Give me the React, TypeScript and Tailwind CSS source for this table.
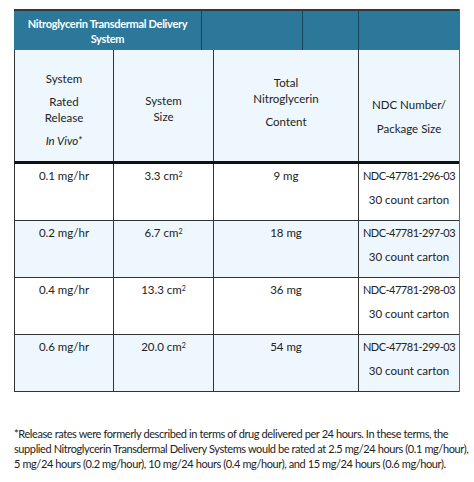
import React from "react";

const rows = [
  { rate: "0.1 mg/hr", size: "3.3", total: "9 mg", ndc: "NDC-47781-296-03", bg: "bg-white" },
  { rate: "0.2 mg/hr", size: "6.7", total: "18 mg", ndc: "NDC-47781-297-03", bg: "bg-[#eef7fd]" },
  { rate: "0.4 mg/hr", size: "13.3", total: "36 mg", ndc: "NDC-47781-298-03", bg: "bg-white" },
  { rate: "0.6 mg/hr", size: "20.0", total: "54 mg", ndc: "NDC-47781-299-03", bg: "bg-[#eef7fd]" },
];

export default function App() {
  return (
    <div className="w-[474px] h-[482px] bg-white pt-[9px] pl-[14px] text-[11.5px] text-[#222] font-['Lato','Liberation_Sans',sans-serif]">
      <div className="w-[446px] flex flex-col border-r border-[#666]">
        {/* header bar */}
        <div className="flex h-[41px] bg-[#2b789b] border-t-2 border-[#2f3a40] text-white font-bold text-[11px] tracking-[-0.3px] leading-[15px]">
          <div className="w-[188px] flex items-center justify-center text-center whitespace-nowrap border-r border-[#1c4457]">
            <span>
              Nitroglycerin Transdermal Delivery
              <br />
              System
            </span>
          </div>
          <div className="w-[101px] border-r border-[#1c4457]" />
          <div className="w-[56px] border-r border-[#1c4457]" />
          <div className="flex-1" />
        </div>
        {/* column headings */}
        <div className="flex h-[114px] bg-[#eef7fd] border-l border-[#333] border-b-[3px] border-b-[#111] leading-[16px] text-center">
          <div className="w-[99px] flex flex-col items-center justify-center gap-[7px] border-r border-[#333] pt-[8px]">
            <p>System</p>
            <p>Rated<br />Release</p>
            <p className="italic">In Vivo*</p>
          </div>
          <div className="w-[100px] flex flex-col items-center justify-center border-r border-[#333] pt-[7px]">
            <p>System<br />Size</p>
          </div>
          <div className="w-[145px] flex flex-col items-center justify-center gap-[7px] border-r border-[#333] pb-[7px]">
            <p>Total<br />Nitroglycerin</p>
            <p>Content</p>
          </div>
          <div className="flex-1 flex flex-col items-center justify-center gap-[8px] pt-[22px]">
            <p>NDC Number/</p>
            <p>Package Size</p>
          </div>
        </div>
        {rows.map((r) => (
          <div key={r.ndc} className={`flex h-[57px] ${r.bg} border-l border-b border-[#333] leading-[16px] text-center`}>
            <div className="w-[99px] border-r border-[#333] pt-[4px]">{r.rate}</div>
            <div className="w-[100px] border-r border-[#333] pt-[4px]">
              {r.size} cm<sup className="text-[7px]">2</sup>
            </div>
            <div className="w-[145px] border-r border-[#333] pt-[4px]">{r.total}</div>
            <div className="flex-1 pt-[4px] flex flex-col items-center gap-[8px] whitespace-nowrap">
              <p className="text-[11px] tracking-[-0.5px]">{r.ndc}</p>
              <p>30 count carton</p>
            </div>
          </div>
        ))}
      </div>
      <p className="mt-[34px] w-[456px] text-[11px] tracking-[-0.4px] leading-[15px]">
        *Release rates were formerly described in terms of drug delivered per 24 hours. In these terms, the supplied Nitroglycerin Transdermal Delivery Systems would be rated at 2.5 mg/24 hours (0.1 mg/hour), 5 mg/24 hours (0.2 mg/hour), 10 mg/24 hours (0.4 mg/hour), and 15 mg/24 hours (0.6 mg/hour).
      </p>
    </div>
  );
}
